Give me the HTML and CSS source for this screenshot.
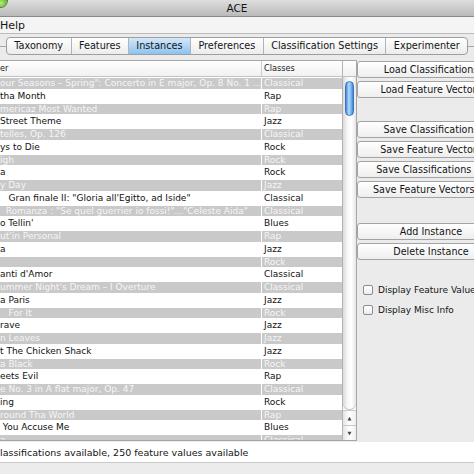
FILE: index.html
```html
<!DOCTYPE html>
<html lang="en">
<head>
    <meta charset="UTF-8">
    <meta name="viewport" content="width=device-width, initial-scale=1.0">
    <title>ACE</title>
    <link rel="stylesheet" href="styles.css">
</head>
<body>

    <div class="window">
        <div class="titlebar">
            <span class="zoom-btn"></span>
            <span class="title">ACE</span>
        </div>

        <div class="menubar">
            <span class="menu">Help</span>
        </div>

        <!-- Tab strip -->
        <div class="tabs-row">
            <div class="tab-line"></div>
            <div class="tabs">
                <div class="tab">Taxonomy</div>
                <div class="tab">Features</div>
                <div class="tab active">Instances</div>
                <div class="tab">Preferences</div>
                <div class="tab">Classification Settings</div>
                <div class="tab">Experimenter</div>
            </div>
            <div class="tab-line"></div>
        </div>

        <div class="pane">
            <div class="table-box">
                <div class="table">
                    <div class="thead">
                        <div class="th th-title">er</div>
                        <div class="th">Classes</div>
                    </div>
                    <div class="tbody">
                        <div class="row alt"><div class="cell title">our Seasons – Spring": Concerto in E major, Op. 8 No. 1 ...</div><div class="cell">Classical</div></div>
                        <div class="row"><div class="cell title">tha Month</div><div class="cell">Rap</div></div>
                        <div class="row alt"><div class="cell title">mericaz Most Wanted</div><div class="cell">Rap</div></div>
                        <div class="row"><div class="cell title">Street Theme</div><div class="cell">Jazz</div></div>
                        <div class="row alt"><div class="cell title">telles, Op. 126</div><div class="cell">Classical</div></div>
                        <div class="row"><div class="cell title">ys to Die</div><div class="cell">Rock</div></div>
                        <div class="row alt"><div class="cell title">igh</div><div class="cell">Rock</div></div>
                        <div class="row"><div class="cell title">a</div><div class="cell">Rock</div></div>
                        <div class="row alt"><div class="cell title">y Day</div><div class="cell">Jazz</div></div>
                        <div class="row"><div class="cell title">&nbsp;&nbsp;&nbsp;Gran finale II: "Gloria all'Egitto, ad Iside"</div><div class="cell">Classical</div></div>
                        <div class="row alt"><div class="cell title">&nbsp;&nbsp;Romanza : "Se quel guerrier io fossi!"..."Celeste Aida"</div><div class="cell">Classical</div></div>
                        <div class="row"><div class="cell title">o Tellin'</div><div class="cell">Blues</div></div>
                        <div class="row alt"><div class="cell title">ut'in Personal</div><div class="cell">Rap</div></div>
                        <div class="row"><div class="cell title">a</div><div class="cell">Jazz</div></div>
                        <div class="row alt"><div class="cell title"></div><div class="cell">Rock</div></div>
                        <div class="row"><div class="cell title">anti d'Amor</div><div class="cell">Classical</div></div>
                        <div class="row alt"><div class="cell title">ummer Night's Dream – I Overture</div><div class="cell">Classical</div></div>
                        <div class="row"><div class="cell title">a Paris</div><div class="cell">Jazz</div></div>
                        <div class="row alt"><div class="cell title">&nbsp;&nbsp;&nbsp;For It</div><div class="cell">Rock</div></div>
                        <div class="row"><div class="cell title">rave</div><div class="cell">Jazz</div></div>
                        <div class="row alt"><div class="cell title">n Leaves</div><div class="cell">Jazz</div></div>
                        <div class="row"><div class="cell title">t The Chicken Shack</div><div class="cell">Jazz</div></div>
                        <div class="row alt"><div class="cell title">a Black</div><div class="cell">Rock</div></div>
                        <div class="row"><div class="cell title">eets Evil</div><div class="cell">Rap</div></div>
                        <div class="row alt"><div class="cell title">e No. 3 in A flat major, Op. 47</div><div class="cell">Classical</div></div>
                        <div class="row"><div class="cell title">ing</div><div class="cell">Rock</div></div>
                        <div class="row alt"><div class="cell title">round Tha World</div><div class="cell">Rap</div></div>
                        <div class="row"><div class="cell title">&nbsp;You Accuse Me</div><div class="cell">Blues</div></div>
                        <div class="row alt"><div class="cell title">a</div><div class="cell">Classical</div></div>
                    </div>
                </div>

                <!-- Aqua style scrollbar -->
                <div class="vscroll">
                    <div class="corner"></div>
                    <div class="track"><div class="thumb"></div></div>
                    <div class="arrow">&#9650;</div>
                    <div class="arrow">&#9660;</div>
                </div>
            </div>

            <div class="side">
                <div class="btn">Load Classifications</div>
                <div class="btn">Load Feature Vectors</div>

                <div class="btn group">Save Classifications</div>
                <div class="btn">Save Feature Vectors</div>
                <div class="btn">Save Classifications As</div>
                <div class="btn">Save Feature Vectors As</div>

                <div class="btn group-lg">Add Instance</div>
                <div class="btn">Delete Instance</div>

                <label class="check first"><span class="box"></span>Display Feature Values</label>
                <label class="check"><span class="box"></span>Display Misc Info</label>
            </div>
        </div>

        <div class="status">lassifications available, 250 feature values available</div>
        <div class="footer"></div>
    </div>

</body>
</html>
```

FILE: styles.css
```css
/* Basic styling */
html, body {
    margin: 0;
    width: 474px;
    height: 474px;
    overflow: hidden;
}

body {
    font-family: "DejaVu Sans", sans-serif;
    background-color: #ebebeb;
    color: #151515;
}

.window {
    width: 474px;
    height: 474px;
    display: flex;
    flex-direction: column;
}

/* Title bar */
.titlebar {
    position: relative;
    height: 16px;
    border-bottom: 1px solid #8a8a8a;
    background: linear-gradient(#dedede, #bababa);
    text-align: center;
    font-size: 10.5px;
    line-height: 16px;
    flex-shrink: 0;
}

.zoom-btn {
    position: absolute;
    left: -6px;
    top: -6px;
    width: 13px;
    height: 13px;
    border-radius: 50%;
    background: radial-gradient(circle at 55% 70%, #b6ec7c, #5cae2a 55%, #2f7a12);
    box-shadow: 0 0 0 1px #4f7d36;
}

/* Menu bar */
.menubar {
    height: 16px;
    border-bottom: 1px solid #bcbcbc;
    background-color: #f4f4f4;
    font-size: 11px;
    line-height: 17px;
    flex-shrink: 0;
}

/* Tabs */
.tabs-row {
    display: flex;
    align-items: center;
    height: 18px;
    margin-top: 3px;
    flex-shrink: 0;
}

.tab-line {
    flex: 1;
    height: 1px;
    background-color: #a8a8a8;
}

.tabs {
    display: flex;
    height: 16px;
    border: 1px solid #9e9e9e;
    border-radius: 4px;
    overflow: hidden;
    background: linear-gradient(#ffffff, #ececec);
}

.tab {
    padding: 0 7.4px;
    font-size: 9.7px;
    line-height: 16px;
    white-space: nowrap;
    border-left: 1px solid #b4b4b4;
}

.tab:first-child {
    border-left: none;
}

.tab.active {
    background: linear-gradient(#d3e8fb, #8ec2ee);
}

/* Main pane */
.pane {
    display: flex;
    margin-top: 5px;
    height: 381px;
    flex-shrink: 0;
}

.table-box {
    display: flex;
    width: 357px;
    box-sizing: border-box;
    border-top: 1px solid #a6a6a6;
    border-right: 1px solid #a6a6a6;
    border-bottom: 1px solid #a6a6a6;
    background-color: #fff;
    flex-shrink: 0;
}

.table {
    width: 343px;
    display: flex;
    flex-direction: column;
    overflow: hidden;
}

.thead {
    display: grid;
    grid-template-columns: 262px 1fr;
    height: 16px;
    box-sizing: border-box;
    border-bottom: 1px solid #c2c2c2;
    background: linear-gradient(#ffffff, #f1f1f1);
    flex-shrink: 0;
}

.th {
    font-size: 8.2px;
    line-height: 15px;
    padding-left: 2px;
    color: #222;
}

.th-title {
    padding-left: 0;
    border-right: 1px solid #cfcfcf;
}

.tbody {
    flex: 1;
    overflow: hidden;
}

.row {
    display: grid;
    grid-template-columns: 262px 1fr;
    height: 12.75px;
    box-sizing: border-box;
    font-size: 9px;
    line-height: 12px;
    color: #111;
}

.row.alt {
    color: #f6f6f6;
}

.row.alt .cell {
    background-color: #c9c9c9;
    border-top: 1px solid #fff;
    border-bottom: 1px solid #fff;
    line-height: 10.75px;
}

.cell {
    white-space: nowrap;
    overflow: hidden;
    padding-left: 2px;
    box-sizing: border-box;
}

.cell.title {
    padding-left: 0;
    border-right: 1px solid #fff;
}

/* Scrollbar */
.vscroll {
    width: 14px;
    box-sizing: border-box;
    border-left: 1px solid #b3b3b3;
    display: flex;
    flex-direction: column;
    flex-shrink: 0;
}

.corner {
    height: 16px;
    box-sizing: border-box;
    border-bottom: 1px solid #c2c2c2;
    background: linear-gradient(#ffffff, #f1f1f1);
}

.track {
    flex: 1;
    border-radius: 0 0 6px 6px;
    background: linear-gradient(to right, #dadada, #f7f7f7 35%, #ffffff 65%, #e6e6e6);
    box-shadow: inset 0 -1px 0 #c4c4c4;
}

.thumb {
    margin: 4px 2px 0;
    height: 35px;
    border-radius: 5px;
    box-sizing: border-box;
    border: 1px solid #3f72b6;
    background: linear-gradient(to right, #3f84d8, #b5dafa 40%, #7cb9f0 70%, #3e83d6);
}

.arrow {
    height: 14px;
    font-size: 5px;
    line-height: 14px;
    text-align: center;
    color: #444;
    border-top: 1px solid #c8c8c8;
    background: linear-gradient(to right, #e4e4e4, #ffffff 50%, #eeeeee);
}

/* Right side buttons */
.side {
    padding: 1px 0 0 0;
    min-width: 0;
}

.btn {
    width: 148px;
    height: 17px;
    box-sizing: border-box;
    margin-bottom: 3px;
    border: 1px solid #a3a3a3;
    border-radius: 3px;
    background: linear-gradient(#ffffff, #eeeeee);
    font-size: 9.6px;
    line-height: 15px;
    text-align: center;
    white-space: nowrap;
}

.btn.group {
    margin-top: 23px;
}

.btn.group-lg {
    margin-top: 25px;
}

.check {
    display: flex;
    align-items: center;
    gap: 5px;
    height: 11px;
    margin-left: 6px;
    margin-bottom: 9px;
    font-size: 9px;
    white-space: nowrap;
}

.check.first {
    margin-top: 24px;
}

.box {
    width: 10px;
    height: 10px;
    box-sizing: border-box;
    border: 1px solid #8d8d8d;
    border-radius: 2px;
    background: linear-gradient(#ffffff, #ececec);
    flex-shrink: 0;
}

/* Status */
.status {
    margin-top: 1px;
    height: 20px;
    background-color: #fff;
    font-size: 9.5px;
    line-height: 21px;
    white-space: nowrap;
    flex-shrink: 0;
}

.footer {
    flex: 1;
    border-top: 1px solid #c9c9c9;
    background-color: #ececec;
}
```
